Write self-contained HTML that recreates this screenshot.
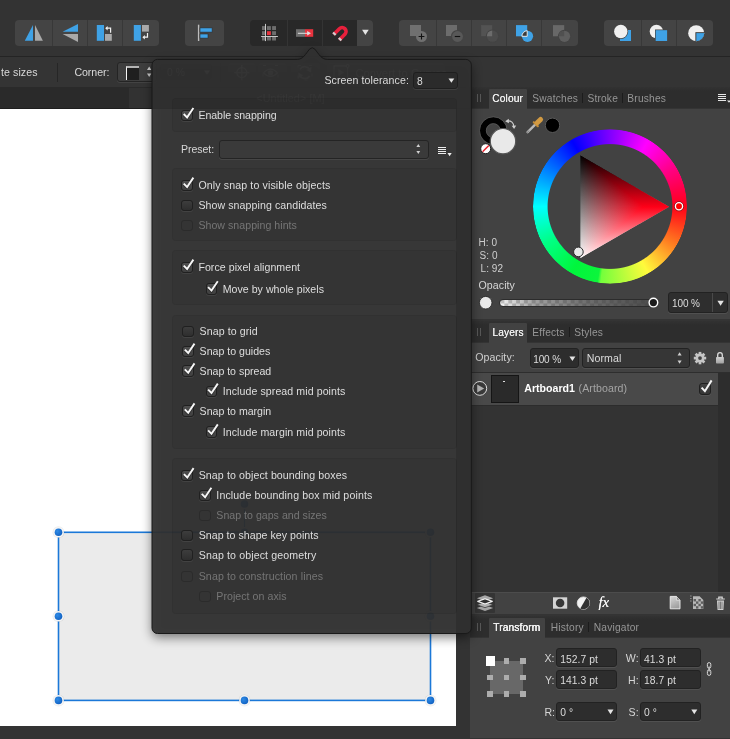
<!DOCTYPE html><html><head><meta charset="utf-8"><title>Snapping</title><style>
html,body{margin:0;padding:0;}
body{width:730px;height:739px;overflow:hidden;background:#333333;position:relative;
 font-family:"Liberation Sans",sans-serif;font-size:10.5px;color:#d6d6d6;}
div,span,svg{position:absolute;box-sizing:border-box;}
.t{white-space:nowrap;line-height:12px;letter-spacing:0.08px;}
.grp{background:#444444;border-radius:4px;}
.dgrp{background:#282828;border-radius:4px;}
.fld{background:#2d2d2d;border:1px solid #222222;border-radius:3px;box-shadow:0 1px 0 rgba(255,255,255,0.08);}
.cb{border:1px solid #202020;border-radius:3px;background:linear-gradient(#4e4e4e,#404040);box-shadow:0 1px 0 rgba(255,255,255,0.07);}
.cb.off{background:linear-gradient(#3d3d3d,#2e2e2e);}
.cb.dis{background:#343434;border-color:#2b2b2b;box-shadow:none;}
.gb{background:rgba(0,0,0,0.05);border-radius:4px;box-shadow:inset 0 0 0 1px rgba(0,0,0,0.05);}
.tabbar{background:linear-gradient(#323232 0,#2d2d2d 4px);}
.tab{background:#424242;}
</style></head><body><div id="root" style="left:0;top:0;width:730px;height:739px;will-change:transform;">
<div style="left:0px;top:0px;width:730px;height:56px;background:#333333;"></div>
<div style="left:0px;top:56px;width:730px;height:1px;background:#242424;"></div>
<div style="left:0px;top:57px;width:730px;height:30px;background:#343434;"></div>
<div style="left:0px;top:87px;width:470px;height:1px;background:#2a2a2a;"></div>
<span class="t" style="left:4px;top:-12px;font-size:11px;color:#a8a8a8;">Affinity Designer</span>
<span class="t" style="left:122px;top:-12px;font-size:11px;color:#a8a8a8;">(see Snapping options),</span>
<div class="grp" style="left:15px;top:20px;width:144px;height:26px;"></div>
<div style="left:51.5px;top:20px;width:1px;height:26px;background:#383838;"></div>
<div style="left:87.0px;top:20px;width:1px;height:26px;background:#383838;"></div>
<div style="left:122.0px;top:20px;width:1px;height:26px;background:#383838;"></div>
<svg style="left:0;top:0" width="730" height="60" viewBox="0 0 730 60">
<polygon points="24.8,40.8 33,40.8 33,25" fill="#3fa2e6"/>
<polygon points="35,25 35,40.8 42.9,40.8" fill="#a9a9a9"/>
<polygon points="62.6,31.8 78,31.8 78,23.9" fill="#3fa2e6"/>
<polygon points="62.6,34 78,34 78,42" fill="#a9a9a9"/>
<rect x="96.8" y="25" width="7.2" height="15.8" fill="#3fa2e6"/>
<rect x="105" y="34" width="6.8" height="6.8" fill="#a9a9a9"/>
<path d="M106.6 28.2 H110.6 V32.8" fill="none" stroke="#f0f0f0" stroke-width="1.2"/>
<polygon points="105.2,28.2 107.6,26 107.6,30.4" fill="#f0f0f0"/>
<rect x="133.8" y="25" width="7.1" height="15.8" fill="#3fa2e6"/>
<rect x="142" y="25" width="6.9" height="6.6" fill="#a9a9a9"/>
<path d="M147.5 33 V37.2 H144" fill="none" stroke="#f0f0f0" stroke-width="1.2"/>
<polygon points="142.4,37.2 144.8,35 144.8,39.4" fill="#f0f0f0"/>
</svg>
<div class="grp" style="left:185px;top:20px;width:39px;height:26px;"></div>
<svg style="left:0;top:0" width="730" height="60" viewBox="0 0 730 60">
<rect x="197.9" y="24.7" width="1.4" height="16.3" fill="#bdbdbd"/>
<rect x="200" y="27.9" width="12.1" height="4.2" fill="#3fa2e6" stroke="#2c2c2c" stroke-width="0.6"/>
<rect x="200" y="34" width="8" height="4.1" fill="#3fa2e6" stroke="#2c2c2c" stroke-width="0.6"/>
</svg>
<div class="dgrp" style="left:250px;top:20px;width:123px;height:26px;"></div>
<div style="left:357px;top:20px;width:16px;height:26px;background:#444444;border-radius:0 4px 4px 0;"></div>
<div style="left:287.0px;top:20px;width:1px;height:26px;background:#343434;"></div>
<div style="left:322.0px;top:20px;width:1px;height:26px;background:#343434;"></div>
<svg style="left:0;top:0" width="730" height="60" viewBox="0 0 730 60"><rect x="262" y="26.1" width="3.9" height="3.9" fill="#6e6e6e"/><rect x="262" y="31.2" width="3.9" height="3.9" fill="#6e6e6e"/><rect x="262" y="36.6" width="3.9" height="3.9" fill="#6e6e6e"/><rect x="267" y="26.1" width="3.9" height="3.9" fill="#6e6e6e"/><rect x="267" y="31.2" width="3.9" height="3.9" fill="#e8343f"/><rect x="267" y="36.6" width="3.9" height="3.9" fill="#6e6e6e"/><rect x="272.1" y="26.1" width="3.9" height="3.9" fill="#6e6e6e"/><rect x="272.1" y="31.2" width="3.9" height="3.9" fill="#6e6e6e"/><rect x="272.1" y="36.6" width="3.9" height="3.9" fill="#6e6e6e"/><rect x="265.1" y="23.9" width="0.9" height="17.2" fill="#d8d8d8"/><rect x="261.1" y="36" width="16.8" height="0.9" fill="#d8d8d8"/><rect x="296" y="29.2" width="9" height="7.6" fill="#6e6e6e"/><rect x="305" y="29.2" width="8.2" height="7.6" fill="#e8343f"/><rect x="297.9" y="32.8" width="10" height="1" fill="#e0e0e0"/><polygon points="311,33.3 307.2,31 307.2,35.6" fill="#e0e0e0"/><path d="M333.6 34.5 L339.4 28.7 A3.93 3.93 0 0 1 345.1 34.1 L339.3 39.9" fill="none" stroke="#e8203c" stroke-width="3.6"/><path d="M333.6 34.5 L335.1 33" fill="none" stroke="#d0d0d0" stroke-width="3.6"/><path d="M339.3 39.9 L340.8 38.4" fill="none" stroke="#d0d0d0" stroke-width="3.6"/><polygon points="362.1,29.8 368.7,29.8 365.4,35" fill="#e4e4e4"/></svg>
<div class="grp" style="left:399px;top:20px;width:178.5px;height:26px;"></div>
<div style="left:436.0px;top:20px;width:1px;height:26px;background:#383838;"></div>
<div style="left:471.0px;top:20px;width:1px;height:26px;background:#383838;"></div>
<div style="left:506.0px;top:20px;width:1px;height:26px;background:#383838;"></div>
<div style="left:541.0px;top:20px;width:1px;height:26px;background:#383838;"></div>
<svg style="left:0;top:0" width="730" height="60" viewBox="0 0 730 60">
<defs>
<clipPath id="cq1"><rect x="481" y="25" width="10.8" height="10.8"/></clipPath>
<clipPath id="cq2"><rect x="516" y="25" width="11" height="11"/></clipPath>
<clipPath id="cq3"><rect x="553" y="25" width="11" height="11"/></clipPath>
<clipPath id="cq4"><circle cx="696.2" cy="33.2" r="8"/></clipPath>
</defs>
<rect x="410" y="25" width="11" height="11" fill="#707070"/>
<circle cx="421.5" cy="36.5" r="5.5" fill="#707070"/>
<path d="M418.6 36.5 H424.4 M421.5 33.6 V39.4" stroke="#111" stroke-width="1.1"/>
<rect x="446" y="25" width="11" height="11" fill="#6c6c6c"/>
<circle cx="457.5" cy="36.5" r="6.6" fill="#444444"/>
<circle cx="457.5" cy="36.5" r="5.4" fill="#585858"/>
<path d="M454.8 36.5 H460.2" stroke="#111" stroke-width="1.1"/>
<rect x="481.1" y="25.1" width="11.1" height="11.1" fill="#535353"/>
<circle cx="492.5" cy="36.2" r="6.6" fill="#444444"/>
<circle cx="492.5" cy="36.2" r="5.6" fill="#4c4c4c"/>
<path d="M486.9 36.2 A5.6 5.6 0 0 1 492.2 30.6 V36.2 Z" fill="#6c6c6c"/>
<rect x="516" y="25.1" width="11.2" height="11.2" fill="#3fa2e6"/>
<circle cx="527.5" cy="36.3" r="5.6" fill="#3fa2e6"/>
<path d="M521.9 36.3 A5.6 5.6 0 0 1 527.2 30.7 V36.3 Z" fill="#3a3a3a" stroke="#f4f4f4" stroke-width="0.9"/>
<rect x="553" y="25.1" width="11.2" height="11.2" fill="#686868"/>
<circle cx="564.5" cy="36.3" r="6.6" fill="#444444"/>
<circle cx="564.5" cy="36.3" r="5.6" fill="#5e5e5e"/>
<path d="M558.9 36.3 A5.6 5.6 0 0 1 564.2 30.7 V36.3 Z" fill="#505050"/>
</svg>
<div class="grp" style="left:604px;top:20px;width:109px;height:26px;"></div>
<div style="left:641.2px;top:20px;width:1px;height:26px;background:#383838;"></div>
<div style="left:676.1px;top:20px;width:1px;height:26px;background:#383838;"></div>
<svg style="left:0;top:0" width="730" height="60" viewBox="0 0 730 60">
<defs><clipPath id="cq5"><circle cx="696.2" cy="33.2" r="8"/></clipPath></defs>
<rect x="620" y="30" width="11" height="11" fill="#3fa2e6"/>
<circle cx="620.8" cy="31.5" r="7.4" fill="#444444"/>
<circle cx="620.8" cy="31.5" r="6.7" fill="#f0f0f0"/>
<circle cx="656.4" cy="31.5" r="6.7" fill="#f0f0f0"/>
<rect x="655" y="29.5" width="12.1" height="11.5" fill="#444444"/>
<rect x="655.7" y="30.2" width="11.4" height="10.8" fill="#3fa2e6"/>
<circle cx="696.2" cy="33.2" r="8" fill="#f0f0f0"/>
<rect x="695.4" y="32.2" width="10" height="10" fill="#333" clip-path="url(#cq5)"/>
<rect x="696.3" y="33.1" width="10" height="10" fill="#3fa2e6" clip-path="url(#cq5)"/>
</svg>
<span class="t" style="left:1px;top:66px;font-size:10.6px;color:#dadada;">te sizes</span>
<div style="left:57px;top:63px;width:1px;height:19px;background:#262626;"></div>
<span class="t" style="left:74.4px;top:66px;font-size:10.6px;color:#dadada;letter-spacing:-0.034px;">Corner:</span>
<div class="fld" style="left:117px;top:62.3px;width:40px;height:19.5px;background:#3e3e3e;border-color:#242424;"></div>
<div style="left:125.8px;top:65.8px;width:13.1px;height:13.9px;background:#1f1f1f;border-left:1.3px solid #f4f4f4;border-top:2px solid #b4b4b4;"></div>
<svg style="left:0;top:0" width="730" height="100" viewBox="0 0 730 100"><polygon points="147,70 151.4,70 149.2,66.6" fill="#cfcfcf"/><polygon points="147,73.6 151.4,73.6 149.2,77" fill="#cfcfcf"/></svg>
<div class="fld" style="left:159.6px;top:63.6px;width:52px;height:16.6px;background:#2a2a2a;"></div>
<span class="t" style="left:167px;top:66.5px;font-size:10.3px;color:#a8a8a8;">0 %</span>
<div style="left:220px;top:63px;width:1px;height:19px;background:#262626;"></div>
<div style="left:228px;top:62.5px;width:28px;height:20px;background:#444444;border-radius:3px;"></div>
<div style="left:258px;top:62.5px;width:29px;height:20px;background:#444444;border-radius:3px;"></div>
<div style="left:291px;top:62.5px;width:29px;height:20px;background:#444444;border-radius:3px;"></div>
<div style="left:327px;top:62.5px;width:118px;height:20px;background:#444444;border-radius:3px;"></div>
<svg style="left:0;top:0" width="730" height="100" viewBox="0 0 730 100">
<polygon points="204,70.4 210,70.4 207,74.8" fill="#b4b4b4"/>
<circle cx="241.8" cy="72.6" r="5" fill="none" stroke="#b4b4b4" stroke-width="1.2"/>
<path d="M241.8 65 V80.2 M234.2 72.6 H249.4" stroke="#b4b4b4" stroke-width="1.1"/>
<path d="M263.5 72.8 Q270.5 65.6 277.5 72.8 Q270.5 80 263.5 72.8 Z" fill="none" stroke="#b4b4b4" stroke-width="1.2"/>
<circle cx="270.5" cy="72.8" r="2.6" fill="#b4b4b4"/>
<rect x="263" y="65.5" width="15" height="14.6" fill="none" stroke="#9c9c9c" stroke-width="0.8" stroke-dasharray="3 9"/>
<path d="M300 69.2 A5.6 5.6 0 0 1 310 70.4 M309.6 76 A5.6 5.6 0 0 1 299.6 74.8" fill="none" stroke="#b4b4b4" stroke-width="1.6"/>
<polygon points="311.4,67 311,72.4 306.6,70" fill="#b4b4b4"/><polygon points="298.2,78.2 298.6,72.8 303,75.2" fill="#b4b4b4"/>
<rect x="298" y="65.5" width="14" height="14.6" fill="none" stroke="#9c9c9c" stroke-width="0.8" stroke-dasharray="3 8"/>
<rect x="334" y="66" width="13.6" height="12.6" fill="none" stroke="#b4b4b4" stroke-width="1"/>
<polygon points="338.4,69 338.4,76 344.2,72.5" fill="#b4b4b4"/>
<circle cx="347.6" cy="66" r="1.5" fill="#444" stroke="#b4b4b4" stroke-width="0.8"/>
</svg>
<span class="t" style="left:355.4px;top:67px;font-size:11.2px;color:#b4b4b4;">Convert to Curves</span>
<div style="left:0px;top:88px;width:470px;height:20px;background:#2a2a2a;"></div>
<div style="left:128.5px;top:88px;width:342px;height:20px;background:#323232;"></div>
<div style="left:0px;top:108px;width:470px;height:1px;background:#1e1e1e;"></div>
<span class="t" style="left:256.3px;top:92px;font-size:10.8px;color:#c8c8c8;">&lt;Untitled&gt; [M]</span>
<div style="left:0px;top:109px;width:456px;height:617px;background:#ffffff;"></div>
<div style="left:58.5px;top:532.3px;width:372px;height:168.1px;background:#ebebeb;"></div>
<svg style="left:0;top:0" width="730" height="739" viewBox="0 0 730 739"><defs><radialGradient id="hg" cx="35%" cy="35%" r="75%"><stop offset="0" stop-color="#2f8be6"/><stop offset="1" stop-color="#0f5fc0"/></radialGradient></defs><rect x="58.5" y="532.3" width="372" height="168.1" fill="none" stroke="#1b78d8" stroke-width="1.6"/><path d="M244.5 532.3 V507" stroke="#1b78d8" stroke-width="1.2"/>
<circle cx="58.5" cy="532.3" r="6" fill="#000" opacity="0.07"/><circle cx="58.5" cy="532.3" r="5.3" fill="#f6f6f6"/><circle cx="58.5" cy="532.3" r="3.8" fill="url(#hg)"/>
<circle cx="244.5" cy="532.3" r="6" fill="#000" opacity="0.07"/><circle cx="244.5" cy="532.3" r="5.3" fill="#f6f6f6"/><circle cx="244.5" cy="532.3" r="3.8" fill="url(#hg)"/>
<circle cx="430.5" cy="532.3" r="6" fill="#000" opacity="0.07"/><circle cx="430.5" cy="532.3" r="5.3" fill="#f6f6f6"/><circle cx="430.5" cy="532.3" r="3.8" fill="url(#hg)"/>
<circle cx="58.5" cy="616.3" r="6" fill="#000" opacity="0.07"/><circle cx="58.5" cy="616.3" r="5.3" fill="#f6f6f6"/><circle cx="58.5" cy="616.3" r="3.8" fill="url(#hg)"/>
<circle cx="430.5" cy="616.3" r="6" fill="#000" opacity="0.07"/><circle cx="430.5" cy="616.3" r="5.3" fill="#f6f6f6"/><circle cx="430.5" cy="616.3" r="3.8" fill="url(#hg)"/>
<circle cx="58.5" cy="700.4" r="6" fill="#000" opacity="0.07"/><circle cx="58.5" cy="700.4" r="5.3" fill="#f6f6f6"/><circle cx="58.5" cy="700.4" r="3.8" fill="url(#hg)"/>
<circle cx="244.5" cy="700.4" r="6" fill="#000" opacity="0.07"/><circle cx="244.5" cy="700.4" r="5.3" fill="#f6f6f6"/><circle cx="244.5" cy="700.4" r="3.8" fill="url(#hg)"/>
<circle cx="430.5" cy="700.4" r="6" fill="#000" opacity="0.07"/><circle cx="430.5" cy="700.4" r="5.3" fill="#f6f6f6"/><circle cx="430.5" cy="700.4" r="3.8" fill="url(#hg)"/>
<circle cx="244.5" cy="504" r="6" fill="#000" opacity="0.07"/><circle cx="244.5" cy="504" r="5.3" fill="#f6f6f6"/><circle cx="244.5" cy="504" r="3.8" fill="url(#hg)"/>
</svg>
<div style="left:470px;top:87px;width:260px;height:650.7px;background:#343434;"></div>
<div class="tabbar" style="left:470.3px;top:87px;width:260px;height:21px;"></div>
<div style="left:476.8px;top:94px;width:1px;height:8.2px;background:#585858;"></div>
<div style="left:480px;top:94px;width:1px;height:8.2px;background:#585858;"></div>
<div class="tab" style="left:489px;top:89.2px;width:38px;height:19.8px;border-radius:1px 1px 0 0;"></div>
<span class="t" style="left:492.3px;top:92.5px;font-size:10.2px;color:#ececec;letter-spacing:0.1px;text-shadow:0 0 0.4px #fff;">Colour</span>
<span class="t" style="left:532.3px;top:92.5px;font-size:10.2px;color:#969696;letter-spacing:0.2px;">Swatches</span>
<div style="left:582px;top:93px;width:1px;height:10px;background:#1c1c1c;"></div>
<span class="t" style="left:587.4px;top:92.5px;font-size:10.2px;color:#969696;letter-spacing:0.2px;">Stroke</span>
<div style="left:622.2px;top:93px;width:1px;height:10px;background:#1c1c1c;"></div>
<span class="t" style="left:627.3px;top:92.5px;font-size:10.2px;color:#969696;letter-spacing:0.2px;">Brushes</span>
<div style="left:470.3px;top:109px;width:260px;height:210px;background:#424242;"></div>
<svg style="left:0;top:0" width="730" height="739" viewBox="0 0 730 739"><g fill="#e6e6e6"><rect x="718" y="94" width="8" height="1"/><rect x="718" y="96" width="8" height="1"/><rect x="718" y="98" width="8" height="1"/><rect x="718" y="100" width="8" height="1"/></g><polygon points="727,100.4 731,100.4 729,102.8" fill="#e0e0e0"/></svg>
<div style="left:532.7px;top:129.39999999999998px;width:154.6px;height:154.6px;border-radius:50%;background:conic-gradient(from 90deg,#ff0018 0deg,#ff7a20 30deg,#fffa3c 60deg,#74ff3c 97deg,#0cf53c 99.5deg,#00f63c 120deg,#00ff84 150deg,#00ffff 180deg,#0080ff 210deg,#0000ff 240deg,#8000ff 270deg,#ff00ff 300deg,#ff0080 330deg,#ff0018 360deg);-webkit-mask:radial-gradient(circle closest-side,transparent 61.9px,#000 62.9px,#000 76.6px,transparent 77.6px);mask:radial-gradient(circle closest-side,transparent 61.9px,#000 62.9px,#000 76.6px,transparent 77.6px);"></div>
<div style="left:580.4px;top:155.4px;width:88.8px;height:102.5px;clip-path:polygon(0 0,100% 50%,0 100%);background:linear-gradient(#000000,#ffffff);"><div style="left:0;top:0;width:100%;height:50%;background:linear-gradient(#000000,#ff0018);-webkit-mask-image:conic-gradient(from 120deg at 0 0,rgba(0,0,0,1.000) 0deg,rgba(0,0,0,1.000) 8.899999999999999deg,rgba(0,0,0,0.781) 16deg,rgba(0,0,0,0.678) 20deg,rgba(0,0,0,0.566) 25deg,rgba(0,0,0,0.467) 30deg,rgba(0,0,0,0.377) 35deg,rgba(0,0,0,0.294) 40deg,rgba(0,0,0,0.217) 45deg,rgba(0,0,0,0.143) 50deg,rgba(0,0,0,0.071) 55deg,rgba(0,0,0,0.000) 60deg,rgba(0,0,0,0) 60.01deg,rgba(0,0,0,0) 360deg);mask-image:conic-gradient(from 120deg at 0 0,rgba(0,0,0,1.000) 0deg,rgba(0,0,0,1.000) 8.899999999999999deg,rgba(0,0,0,0.781) 16deg,rgba(0,0,0,0.678) 20deg,rgba(0,0,0,0.566) 25deg,rgba(0,0,0,0.467) 30deg,rgba(0,0,0,0.377) 35deg,rgba(0,0,0,0.294) 40deg,rgba(0,0,0,0.217) 45deg,rgba(0,0,0,0.143) 50deg,rgba(0,0,0,0.071) 55deg,rgba(0,0,0,0.000) 60deg,rgba(0,0,0,0) 60.01deg,rgba(0,0,0,0) 360deg);"></div><div style="left:0;top:50%;width:100%;height:50%;background:linear-gradient(#ff0018,#ffffff);-webkit-mask-image:conic-gradient(from 0deg at 0 100%,rgba(0,0,0,0.000) 0deg,rgba(0,0,0,0.071) 5deg,rgba(0,0,0,0.143) 10deg,rgba(0,0,0,0.217) 15deg,rgba(0,0,0,0.294) 20deg,rgba(0,0,0,0.377) 25deg,rgba(0,0,0,0.467) 30deg,rgba(0,0,0,0.566) 35deg,rgba(0,0,0,0.678) 40deg,rgba(0,0,0,0.781) 44deg,rgba(0,0,0,1.000) 51.1deg,rgba(0,0,0,1.000) 60deg,rgba(0,0,0,1) 90deg,rgba(0,0,0,0) 90.01deg,rgba(0,0,0,0) 360deg);mask-image:conic-gradient(from 0deg at 0 100%,rgba(0,0,0,0.000) 0deg,rgba(0,0,0,0.071) 5deg,rgba(0,0,0,0.143) 10deg,rgba(0,0,0,0.217) 15deg,rgba(0,0,0,0.294) 20deg,rgba(0,0,0,0.377) 25deg,rgba(0,0,0,0.467) 30deg,rgba(0,0,0,0.566) 35deg,rgba(0,0,0,0.678) 40deg,rgba(0,0,0,0.781) 44deg,rgba(0,0,0,1.000) 51.1deg,rgba(0,0,0,1.000) 60deg,rgba(0,0,0,1) 90deg,rgba(0,0,0,0) 90.01deg,rgba(0,0,0,0) 360deg);"></div></div>
<svg style="left:0;top:0" width="730" height="739" viewBox="0 0 730 739">
<defs>
<linearGradient id="gk" gradientUnits="userSpaceOnUse" x1="580.4" y1="155.4" x2="624.8" y2="232.3"><stop offset="0" stop-color="#000000"/><stop offset="1" stop-color="#ff0000"/></linearGradient>
<linearGradient id="gw" gradientUnits="userSpaceOnUse" x1="580.4" y1="258.0" x2="624.8" y2="181.1"><stop offset="0" stop-color="#00ffff"/><stop offset="1" stop-color="#000000"/></linearGradient>
</defs>

<circle cx="679" cy="206.3" r="4.6" fill="none" stroke="#222" stroke-width="0.8" opacity="0.7"/>
<circle cx="679" cy="206.3" r="3.6" fill="#ff0000" stroke="#ffffff" stroke-width="1.3"/>
<circle cx="578.4" cy="251.9" r="4.8" fill="#e9e9e9" stroke="#2a2a2a" stroke-width="1"/>
<!-- stroke / fill selectors -->
<circle cx="493.3" cy="130.6" r="10.4" fill="none" stroke="#000000" stroke-width="6.4"/>
<circle cx="493.3" cy="130.6" r="13.8" fill="none" stroke="#5a5a5a" stroke-width="0.8"/>
<circle cx="493.3" cy="130.6" r="7" fill="none" stroke="#5a5a5a" stroke-width="0.8"/>
<circle cx="503" cy="141.2" r="12.7" fill="#e9e9e9" stroke="#555555" stroke-width="1.2"/>
<circle cx="485.7" cy="148.7" r="5" fill="#ffffff" stroke="#222222" stroke-width="1"/>
<path d="M482.6 151.8 L488.8 145.6" stroke="#e8202a" stroke-width="1.4"/>
<path d="M507.2 120.9 Q513.4 120.4 513.9 126.8" fill="none" stroke="#cfcfcf" stroke-width="1.1"/>
<polygon points="505.2,121.3 508.8,118.7 508.9,123.3" fill="#cfcfcf"/>
<polygon points="514.1,129 511.7,125.7 516.2,125.5" fill="#cfcfcf"/>
<!-- eyedropper -->
<path d="M527.6 132.2 L536.6 123.2" stroke="#b8b8b8" stroke-width="2.4" stroke-linecap="round"/>
<path d="M527.2 132.6 L529 130.8" stroke="#8a8a8a" stroke-width="1.2" stroke-linecap="round"/>
<path d="M533.8 122.2 L537.8 126.2" stroke="#c08a38" stroke-width="2.2" stroke-linecap="round"/>
<path d="M537.2 122.8 L540.6 119.4" stroke="#d29a42" stroke-width="5" stroke-linecap="round"/>
<circle cx="552.5" cy="125.3" r="7.2" fill="#000000" stroke="#585858" stroke-width="1"/>
<!-- opacity -->
<circle cx="485.7" cy="302.7" r="6.3" fill="#e9e9e9" stroke="#2a2a2a" stroke-width="0.9"/>
</svg>
<span class="t" style="left:478.5px;top:236.5px;font-size:10px;color:#cfcfcf;">H: 0</span>
<span class="t" style="left:479.5px;top:249.5px;font-size:10px;color:#cfcfcf;">S: 0</span>
<span class="t" style="left:480.5px;top:262.5px;font-size:10px;color:#cfcfcf;">L: 92</span>
<span class="t" style="left:478.5px;top:279px;font-size:10.6px;color:#d6d6d6;">Opacity</span>
<div style="left:498.6px;top:298.6px;width:158px;height:8.6px;border-radius:4.3px;border:0.8px solid #2c2c2c;overflow:hidden;background:linear-gradient(90deg,rgba(60,60,60,0) 0%,rgba(60,60,60,0.45) 22%,rgba(60,60,60,0.72) 55%,rgba(60,60,60,0.93) 100%),conic-gradient(#f4f4f4 25%,#c2c2c2 0 50%,#f4f4f4 0 75%,#c2c2c2 0) 0.5px -0.4px/7.8px 7.8px;"></div>
<svg style="left:0;top:0" width="730" height="739" viewBox="0 0 730 739"><circle cx="653.4" cy="302.6" r="4.3" fill="#1c1c1c" stroke="#ffffff" stroke-width="1.4"/><polygon points="717.4,300.8 723.8,300.8 720.6,305.8" fill="#e4e4e4"/></svg>
<div class="fld" style="left:668px;top:292.3px;width:60.3px;height:20.5px;background:#2e2e2e;"></div>
<div style="left:711.5px;top:293.3px;width:1px;height:18.5px;background:#4a4a4a;"></div>
<span class="t" style="left:672px;top:297.5px;font-size:10px;color:#dcdcdc;letter-spacing:-0.1px;">100 %</span>
<svg style="left:0;top:0" width="730" height="739" viewBox="0 0 730 739"><polygon points="717.4,300.8 723.8,300.8 720.6,305.8" fill="#e4e4e4"/></svg>
<div class="tabbar" style="left:470.3px;top:320.8px;width:260px;height:21.5px;"></div>
<div style="left:476.8px;top:327.8px;width:1px;height:8.2px;background:#585858;"></div>
<div style="left:480px;top:327.8px;width:1px;height:8.2px;background:#585858;"></div>
<div class="tab" style="left:489px;top:323.0px;width:38px;height:20.3px;border-radius:1px 1px 0 0;"></div>
<span class="t" style="left:492.5px;top:326.5px;font-size:10.2px;color:#ececec;letter-spacing:0.1px;text-shadow:0 0 0.4px #fff;">Layers</span>
<span class="t" style="left:532.3px;top:326.5px;font-size:10.2px;color:#969696;letter-spacing:0.2px;">Effects</span>
<div style="left:569px;top:327px;width:1px;height:10px;background:#1c1c1c;"></div>
<span class="t" style="left:574.2px;top:326.5px;font-size:10.2px;color:#969696;letter-spacing:0.2px;">Styles</span>
<div style="left:470.3px;top:343px;width:260px;height:28.5px;background:#424242;"></div>
<span class="t" style="left:475.3px;top:351px;font-size:10.6px;color:#d0d0d0;">Opacity:</span>
<div class="fld" style="left:529.7px;top:348.2px;width:49px;height:20.2px;"></div>
<span class="t" style="left:533.2px;top:353.5px;font-size:10px;color:#dcdcdc;letter-spacing:-0.1px;">100 %</span>
<div class="fld" style="left:581.7px;top:348.3px;width:108px;height:20px;background:#363636;"></div>
<span class="t" style="left:586.8px;top:352px;font-size:10.6px;color:#dcdcdc;">Normal</span>
<svg style="left:0;top:0" width="730" height="739" viewBox="0 0 730 739"><polygon points="569.4,356.4 575.4,356.4 572.4,361" fill="#e4e4e4"/><polygon points="677.6,355.4 681.6,355.4 679.6,352.2" fill="#d0d0d0"/><polygon points="677.6,360.6 681.6,360.6 679.6,363.8" fill="#d0d0d0"/></svg>
<svg style="left:0;top:0" width="730" height="739" viewBox="0 0 730 739"><rect x="698.65" y="351.90000000000003" width="2.7" height="12.4" fill="#c6c6c6" transform="rotate(0 700 358.1)"/><rect x="698.65" y="351.90000000000003" width="2.7" height="12.4" fill="#c6c6c6" transform="rotate(45 700 358.1)"/><rect x="698.65" y="351.90000000000003" width="2.7" height="12.4" fill="#c6c6c6" transform="rotate(90 700 358.1)"/><rect x="698.65" y="351.90000000000003" width="2.7" height="12.4" fill="#c6c6c6" transform="rotate(135 700 358.1)"/><circle cx="700" cy="358.1" r="4.5" fill="#c6c6c6"/><circle cx="700" cy="358.1" r="1.9" fill="#424242"/><defs><linearGradient id="lk" x1="0" y1="0" x2="0" y2="1"><stop offset="0" stop-color="#d0d0d0"/><stop offset="1" stop-color="#a2a2a2"/></linearGradient></defs><path d="M717.7 357.4 V355 A2.3 2.3 0 0 1 722.3 355 V357.4" fill="none" stroke="#dcdcdc" stroke-width="1.3"/><rect x="716" y="357" width="7.9" height="6.6" rx="0.8" fill="url(#lk)"/></svg>
<div style="left:470.3px;top:371.5px;width:260px;height:1px;background:#2e2e2e;"></div>
<div style="left:470.3px;top:372.5px;width:260px;height:219px;background:#333333;"></div>
<div style="left:718px;top:372.5px;width:12px;height:219px;background:#2d2d2d;"></div>
<div style="left:470.3px;top:372.5px;width:247.7px;height:32.8px;background:#494949;"></div>
<div style="left:470.3px;top:405.3px;width:247.7px;height:1px;background:#2c2c2c;"></div>
<div style="left:491px;top:375px;width:28px;height:28px;background:#2a2a2a;border:1px solid #151515;"></div>
<div style="left:503.2px;top:381.4px;width:1.4px;height:1px;background:#e0e0e0;"></div>
<svg style="left:0;top:0" width="730" height="739" viewBox="0 0 730 739"><circle cx="479.8" cy="388.4" r="6.9" fill="#3a3a3a" stroke="#e0e0e0" stroke-width="1"/><polygon points="477.2,384.4 477.2,392.4 484.2,388.4" fill="#b4b4b4"/></svg>
<span class="t" style="left:524.3px;top:382px;font-size:10.6px;color:#ffffff;font-weight:bold;letter-spacing:0;">Artboard1</span>
<span class="t" style="left:578.6px;top:382px;font-size:10.6px;color:#a4a4a4;">(Artboard)</span>
<div class="cb" style="left:699.4px;top:383px;width:12px;height:12px;background:linear-gradient(#424242,#363636);"></div>
<svg style="left:0;top:0" width="730" height="739" viewBox="0 0 730 739"><path d="M701.6 387.6 L704.9 391.2 L711.6 380.4" fill="none" stroke="#f4f4f4" stroke-width="2" stroke-linejoin="miter"/></svg>
<div style="left:470.3px;top:591.6px;width:260px;height:22.4px;background:#424242;border-top:1px solid #4c4c4c;"></div>
<div style="left:474.6px;top:593.2px;width:20.6px;height:19.7px;background:#343434;border-radius:1px;"></div>
<svg style="left:0;top:0" width="730" height="739" viewBox="0 0 730 739">
<path d="M476.8 607.9 L485 604.9 L493.2 607.9 L485 610.9 Z" fill="#a4a4a4"/>
<path d="M476.8 604.7 L485 601.7 L493.2 604.7 L485 607.7 Z" fill="#b0b0b0" stroke="#343434" stroke-width="0.7"/>
<path d="M476.8 598.3 L485 595.3 L493.2 598.3 L485 601.3 Z" fill="#a8a8a8"/>
<path d="M477.7 601.4 L485 598.8 L492.3 601.4 L485 604.0 Z" fill="#303030" stroke="#f6f6f6" stroke-width="1.15" stroke-linejoin="round"/>
<rect x="553" y="597.3" width="14.2" height="11.4" fill="#d4d4d4"/>
<circle cx="560.1" cy="603" r="4.3" fill="#383838"/>
<circle cx="583.4" cy="603.1" r="6.2" fill="#f2f2f2" stroke="#e4e4e4" stroke-width="0.8"/>
<path d="M586.5 597.7 A6.2 6.2 0 0 1 580.3 608.5 Z" fill="#303030"/>
<defs><linearGradient id="pg" x1="0" y1="0" x2="0.4" y2="1"><stop offset="0" stop-color="#d8d8d8"/><stop offset="1" stop-color="#a0a0a0"/></linearGradient></defs>
<path d="M670.2 596.4 H676.4 L680 600.2 V608.8 H670.2 Z" fill="url(#pg)" stroke="#f2f2f2" stroke-width="0.9"/>
<path d="M676.4 596.4 V600.2 H680" fill="#8c8c8c" stroke="#f2f2f2" stroke-width="0.7"/>
<path d="M693 596.3 H699.6 L703.3 600 V609 H693 Z" fill="#b8b8b8"/>
<path d="M690.4 596 H692 M690.4 598.6 H692 M690.4 601 H692" stroke="#cfcfcf" stroke-width="0.9" stroke-dasharray="1 1"/>
<g fill="#5e5e5e"><rect x="693.6" y="599" width="2.4" height="2.4"/><rect x="698.4" y="599" width="2.4" height="2.4"/><rect x="696" y="601.4" width="2.4" height="2.4"/><rect x="700.8" y="601.4" width="2.4" height="2.4"/><rect x="693.6" y="603.8" width="2.4" height="2.4"/><rect x="698.4" y="603.8" width="2.4" height="2.4"/><rect x="696" y="606.2" width="2.4" height="2.4"/><rect x="700.8" y="606.2" width="2.4" height="2.4"/></g>
<path d="M716.2 599 H724.8 M718.8 598.6 V597.2 H722.2 V598.6" fill="none" stroke="#d8d8d8" stroke-width="1.2"/>
<path d="M717 600.6 H724 L723.4 610 H717.6 Z" fill="#d0d0d0"/>
<path d="M719 601.6 V609 M720.5 601.6 V609 M722 601.6 V609" stroke="#555" stroke-width="0.7"/>
</svg>
<span class="t" style="left:598.4px;top:595.5px;font-size:15px;color:#f4f4f4;font-family:'Liberation Serif',serif;font-style:italic;letter-spacing:0;text-shadow:0 0 0.5px #fff;">fx</span>
<div class="tabbar" style="left:470.3px;top:615.8px;width:260px;height:21.7px;"></div>
<div style="left:476.8px;top:622.8px;width:1px;height:8.2px;background:#585858;"></div>
<div style="left:480px;top:622.8px;width:1px;height:8.2px;background:#585858;"></div>
<div class="tab" style="left:489px;top:618.0px;width:56px;height:20.5px;border-radius:1px 1px 0 0;"></div>
<span class="t" style="left:493.2px;top:621.5px;font-size:10.2px;color:#ececec;letter-spacing:0.12px;text-shadow:0 0 0.5px #fff,0 0 0.5px #fff;">Transform</span>
<span class="t" style="left:550.7px;top:621.5px;font-size:10.2px;color:#969696;letter-spacing:0.2px;">History</span>
<div style="left:588.2px;top:622px;width:1px;height:10px;background:#1c1c1c;"></div>
<span class="t" style="left:593.8px;top:621.5px;font-size:10.2px;color:#969696;letter-spacing:0.2px;">Navigator</span>
<div style="left:470.3px;top:637.5px;width:260px;height:100.2px;background:#424242;"></div>
<div style="left:490px;top:661px;width:33.4px;height:33px;background:#686868;"></div>
<div style="left:487.2px;top:674.7px;width:5.6px;height:5.6px;background:#adadad;"></div>
<div style="left:487.2px;top:691.2px;width:5.6px;height:5.6px;background:#adadad;"></div>
<div style="left:503.8px;top:658.2px;width:5.6px;height:5.6px;background:#adadad;"></div>
<div style="left:503.8px;top:674.7px;width:5.6px;height:5.6px;background:#adadad;"></div>
<div style="left:503.8px;top:691.2px;width:5.6px;height:5.6px;background:#adadad;"></div>
<div style="left:520.4000000000001px;top:658.2px;width:5.6px;height:5.6px;background:#adadad;"></div>
<div style="left:520.4000000000001px;top:674.7px;width:5.6px;height:5.6px;background:#adadad;"></div>
<div style="left:520.4000000000001px;top:691.2px;width:5.6px;height:5.6px;background:#adadad;"></div>
<div style="left:485.5px;top:656.4px;width:9.8px;height:9.2px;background:#ffffff;"></div>
<div class="fld" style="left:556.4px;top:648.3px;width:60.5px;height:18.5px;"></div>
<span class="t" style="left:544.4px;top:652px;font-size:10.6px;color:#d6d6d6;">X:</span>
<span class="t" style="left:560.1999999999999px;top:653.5px;font-size:10.3px;color:#dcdcdc;">152.7 pt</span>
<div class="fld" style="left:556.4px;top:670.0px;width:60.5px;height:18.5px;"></div>
<span class="t" style="left:545px;top:674px;font-size:10.6px;color:#d6d6d6;">Y:</span>
<span class="t" style="left:560.1999999999999px;top:674.5px;font-size:10.3px;color:#dcdcdc;">141.3 pt</span>
<div class="fld" style="left:640.2px;top:648.3px;width:60.5px;height:18.5px;"></div>
<span class="t" style="left:625.8px;top:652px;font-size:10.6px;color:#d6d6d6;">W:</span>
<span class="t" style="left:644.0px;top:653.5px;font-size:10.3px;color:#dcdcdc;">41.3 pt</span>
<div class="fld" style="left:640.2px;top:670.0px;width:60.5px;height:18.5px;"></div>
<span class="t" style="left:628px;top:674px;font-size:10.6px;color:#d6d6d6;">H:</span>
<span class="t" style="left:644.0px;top:674.5px;font-size:10.3px;color:#dcdcdc;">18.7 pt</span>
<div class="fld" style="left:556.4px;top:702.1px;width:60.5px;height:18.5px;"></div>
<span class="t" style="left:544.4px;top:706px;font-size:10.6px;color:#d6d6d6;">R:</span>
<span class="t" style="left:560.1999999999999px;top:706.5px;font-size:10.3px;color:#dcdcdc;">0 °</span>
<svg style="left:0;top:0" width="730" height="739" viewBox="0 0 730 739"><polygon points="607.5,709.6 613.5,709.6 610.5,714.2" fill="#e4e4e4"/></svg>
<div class="fld" style="left:640.2px;top:702.1px;width:60.5px;height:18.5px;"></div>
<span class="t" style="left:628.6px;top:706px;font-size:10.6px;color:#d6d6d6;">S:</span>
<span class="t" style="left:644.0px;top:706.5px;font-size:10.3px;color:#dcdcdc;">0 °</span>
<svg style="left:0;top:0" width="730" height="739" viewBox="0 0 730 739"><polygon points="691.3000000000001,709.6 697.3000000000001,709.6 694.3000000000001,714.2" fill="#e4e4e4"/></svg>
<svg style="left:0;top:0" width="730" height="739" viewBox="0 0 730 739"><rect x="707.4" y="662.6" width="3.4" height="5.6" rx="1.7" fill="none" stroke="#d8d8d8" stroke-width="1"/><rect x="707.4" y="669.8" width="3.4" height="5.6" rx="1.7" fill="none" stroke="#d8d8d8" stroke-width="1"/><path d="M709.1 666.4 V671.6" stroke="#d8d8d8" stroke-width="1"/></svg>
<svg style="left:0;top:0" width="730" height="739" viewBox="0 0 730 739">
<defs><filter id="sh" x="-10%" y="-10%" width="120%" height="120%"><feGaussianBlur stdDeviation="5.5"/></filter></defs>
<path d="M157.5 59.4 H297.2 C303.2 59.4 305.59999999999997 53.9 309.5 49.2 Q312.2 46.2 314.9 49.2 C318.8 53.9 321.2 59.4 327.2 59.4 H465.8 A5.5 5.5 0 0 1 471.3 64.9 V628.0 A5.5 5.5 0 0 1 465.8 633.5 H157.5 A5.5 5.5 0 0 1 152 628.0 V64.9 A5.5 5.5 0 0 1 157.5 59.4 Z" fill="#000" opacity="0.5" filter="url(#sh)" transform="translate(0,4)"/>
<path d="M157.5 59.4 H297.2 C303.2 59.4 305.59999999999997 53.9 309.5 49.2 Q312.2 46.2 314.9 49.2 C318.8 53.9 321.2 59.4 327.2 59.4 H465.8 A5.5 5.5 0 0 1 471.3 64.9 V628.0 A5.5 5.5 0 0 1 465.8 633.5 H157.5 A5.5 5.5 0 0 1 152 628.0 V64.9 A5.5 5.5 0 0 1 157.5 59.4 Z" fill="#313131" fill-opacity="0.92" stroke="#191919" stroke-width="1" stroke-opacity="1"/>
</svg>
<span class="t" style="left:324.4px;top:74px;font-size:10.6px;color:#dadada;letter-spacing:0.091px;">Screen tolerance:</span>
<div class="fld" style="left:413.2px;top:72.4px;width:44.5px;height:16.6px;background:#2b2b2b;border-color:#1f1f1f;"></div>
<span class="t" style="left:416.9px;top:75.5px;font-size:10.3px;color:#dcdcdc;">8</span>
<svg style="left:0;top:0" width="730" height="739" viewBox="0 0 730 739"><polygon points="448.5,78.4 454.3,78.4 451.4,82.8" fill="#e4e4e4"/></svg>
<div class="gb" style="left:172px;top:98px;width:284.5px;height:34px;"></div>
<div class="cb" style="left:181.1px;top:110.0px;width:11.8px;height:11.4px;"></div>
<svg style="left:0;top:0" width="730" height="739" viewBox="0 0 730 739"><path d="M183.7 114.0 L187.1 117.4 L193.4 108.0" fill="none" stroke="#1a1a1a" stroke-opacity="0.5" stroke-width="2.6" transform="translate(0,0.8)"/><path d="M183.7 114.0 L187.1 117.4 L193.4 108.0" fill="none" stroke="#f6f6f6" stroke-width="1.9"/></svg>
<span class="t" style="left:198.4px;top:109px;font-size:10.6px;color:#dedede;letter-spacing:-0.047px;">Enable snapping</span>
<span class="t" style="left:181px;top:143px;font-size:10.6px;color:#d6d6d6;letter-spacing:-0.077px;">Preset:</span>
<div class="fld" style="left:219.4px;top:139.5px;width:209.5px;height:19.2px;background:#3a3a3a;border-color:#242424;"></div>
<svg style="left:0;top:0" width="730" height="739" viewBox="0 0 730 739"><polygon points="416.4,147 420.2,147 418.3,144" fill="#cfcfcf"/><polygon points="416.4,151 420.2,151 418.3,154" fill="#cfcfcf"/><g fill="#ececec"><rect x="438" y="147" width="8" height="1"/><rect x="438" y="149" width="8" height="1"/><rect x="438" y="151" width="8" height="1"/><rect x="438" y="153" width="8" height="1"/></g><polygon points="447.5,153 451.7,153 449.6,156.3" fill="#f0f0f0"/></svg>
<div class="gb" style="left:172px;top:168.4px;width:284.5px;height:72.6px;"></div>
<div class="cb" style="left:181.1px;top:179.60000000000002px;width:11.8px;height:11.4px;"></div>
<svg style="left:0;top:0" width="730" height="739" viewBox="0 0 730 739"><path d="M183.7 183.6 L187.1 187.0 L193.4 177.6" fill="none" stroke="#1a1a1a" stroke-opacity="0.5" stroke-width="2.6" transform="translate(0,0.8)"/><path d="M183.7 183.6 L187.1 187.0 L193.4 177.6" fill="none" stroke="#f6f6f6" stroke-width="1.9"/></svg>
<span class="t" style="left:198.4px;top:179px;font-size:10.6px;color:#dedede;letter-spacing:0.130px;">Only snap to visible objects</span>
<div class="cb off" style="left:181.1px;top:199.5px;width:11.8px;height:11.4px;"></div>
<span class="t" style="left:198.4px;top:199px;font-size:10.6px;color:#dedede;">Show snapping candidates</span>
<div class="cb dis" style="left:181.1px;top:219.70000000000002px;width:11.8px;height:11.4px;"></div>
<span class="t" style="left:198.4px;top:219px;font-size:10.6px;color:#757575;letter-spacing:0.038px;">Show snapping hints</span>
<div class="gb" style="left:172px;top:249.7px;width:284.5px;height:55.30000000000001px;"></div>
<div class="cb" style="left:181.1px;top:261.6px;width:11.8px;height:11.4px;"></div>
<svg style="left:0;top:0" width="730" height="739" viewBox="0 0 730 739"><path d="M183.7 265.6 L187.1 269.0 L193.4 259.6" fill="none" stroke="#1a1a1a" stroke-opacity="0.5" stroke-width="2.6" transform="translate(0,0.8)"/><path d="M183.7 265.6 L187.1 269.0 L193.4 259.6" fill="none" stroke="#f6f6f6" stroke-width="1.9"/></svg>
<span class="t" style="left:198.4px;top:261px;font-size:10.6px;color:#dedede;letter-spacing:0.047px;">Force pixel alignment</span>
<div class="cb" style="left:205.5px;top:283.2px;width:11.8px;height:11.4px;"></div>
<svg style="left:0;top:0" width="730" height="739" viewBox="0 0 730 739"><path d="M208.1 287.2 L211.5 290.6 L217.8 281.2" fill="none" stroke="#1a1a1a" stroke-opacity="0.5" stroke-width="2.6" transform="translate(0,0.8)"/><path d="M208.1 287.2 L211.5 290.6 L217.8 281.2" fill="none" stroke="#f6f6f6" stroke-width="1.9"/></svg>
<span class="t" style="left:222.7px;top:283px;font-size:10.6px;color:#dedede;letter-spacing:0.030px;">Move by whole pixels</span>
<div class="gb" style="left:172px;top:314.8px;width:284.5px;height:134.2px;"></div>
<div class="cb off" style="left:182.2px;top:325.8px;width:11.8px;height:11.4px;"></div>
<span class="t" style="left:199.6px;top:325px;font-size:10.6px;color:#dedede;">Snap to grid</span>
<div class="cb" style="left:182.2px;top:345.6px;width:11.8px;height:11.4px;"></div>
<svg style="left:0;top:0" width="730" height="739" viewBox="0 0 730 739"><path d="M184.8 349.6 L188.2 353.0 L194.5 343.6" fill="none" stroke="#1a1a1a" stroke-opacity="0.5" stroke-width="2.6" transform="translate(0,0.8)"/><path d="M184.8 349.6 L188.2 353.0 L194.5 343.6" fill="none" stroke="#f6f6f6" stroke-width="1.9"/></svg>
<span class="t" style="left:199.6px;top:345px;font-size:10.6px;color:#dedede;letter-spacing:0.001px;">Snap to guides</span>
<div class="cb" style="left:182.2px;top:365.40000000000003px;width:11.8px;height:11.4px;"></div>
<svg style="left:0;top:0" width="730" height="739" viewBox="0 0 730 739"><path d="M184.8 369.4 L188.2 372.8 L194.5 363.4" fill="none" stroke="#1a1a1a" stroke-opacity="0.5" stroke-width="2.6" transform="translate(0,0.8)"/><path d="M184.8 369.4 L188.2 372.8 L194.5 363.4" fill="none" stroke="#f6f6f6" stroke-width="1.9"/></svg>
<span class="t" style="left:199.6px;top:365px;font-size:10.6px;color:#dedede;letter-spacing:-0.020px;">Snap to spread</span>
<div class="cb" style="left:205.5px;top:385.6px;width:11.8px;height:11.4px;"></div>
<svg style="left:0;top:0" width="730" height="739" viewBox="0 0 730 739"><path d="M208.1 389.6 L211.5 393.0 L217.8 383.6" fill="none" stroke="#1a1a1a" stroke-opacity="0.5" stroke-width="2.6" transform="translate(0,0.8)"/><path d="M208.1 389.6 L211.5 393.0 L217.8 383.6" fill="none" stroke="#f6f6f6" stroke-width="1.9"/></svg>
<span class="t" style="left:222.7px;top:385px;font-size:10.6px;color:#dedede;">Include spread mid points</span>
<div class="cb" style="left:182.2px;top:405.40000000000003px;width:11.8px;height:11.4px;"></div>
<svg style="left:0;top:0" width="730" height="739" viewBox="0 0 730 739"><path d="M184.8 409.4 L188.2 412.8 L194.5 403.4" fill="none" stroke="#1a1a1a" stroke-opacity="0.5" stroke-width="2.6" transform="translate(0,0.8)"/><path d="M184.8 409.4 L188.2 412.8 L194.5 403.4" fill="none" stroke="#f6f6f6" stroke-width="1.9"/></svg>
<span class="t" style="left:199.6px;top:405px;font-size:10.6px;color:#dedede;letter-spacing:-0.020px;">Snap to margin</span>
<div class="cb" style="left:205.5px;top:426.40000000000003px;width:11.8px;height:11.4px;"></div>
<svg style="left:0;top:0" width="730" height="739" viewBox="0 0 730 739"><path d="M208.1 430.4 L211.5 433.8 L217.8 424.4" fill="none" stroke="#1a1a1a" stroke-opacity="0.5" stroke-width="2.6" transform="translate(0,0.8)"/><path d="M208.1 430.4 L211.5 433.8 L217.8 424.4" fill="none" stroke="#f6f6f6" stroke-width="1.9"/></svg>
<span class="t" style="left:222.7px;top:426px;font-size:10.6px;color:#dedede;">Include margin mid points</span>
<div class="gb" style="left:172px;top:458.4px;width:284.5px;height:155.39999999999998px;"></div>
<div class="cb" style="left:181.29999999999998px;top:470.1px;width:11.8px;height:11.4px;"></div>
<svg style="left:0;top:0" width="730" height="739" viewBox="0 0 730 739"><path d="M183.9 474.1 L187.3 477.5 L193.6 468.1" fill="none" stroke="#1a1a1a" stroke-opacity="0.5" stroke-width="2.6" transform="translate(0,0.8)"/><path d="M183.9 474.1 L187.3 477.5 L193.6 468.1" fill="none" stroke="#f6f6f6" stroke-width="1.9"/></svg>
<span class="t" style="left:198.7px;top:469px;font-size:10.6px;color:#dedede;letter-spacing:0.101px;">Snap to object bounding boxes</span>
<div class="cb" style="left:199.1px;top:489.8px;width:11.8px;height:11.4px;"></div>
<svg style="left:0;top:0" width="730" height="739" viewBox="0 0 730 739"><path d="M201.7 493.8 L205.1 497.2 L211.4 487.8" fill="none" stroke="#1a1a1a" stroke-opacity="0.5" stroke-width="2.6" transform="translate(0,0.8)"/><path d="M201.7 493.8 L205.1 497.2 L211.4 487.8" fill="none" stroke="#f6f6f6" stroke-width="1.9"/></svg>
<span class="t" style="left:216.3px;top:489px;font-size:10.6px;color:#dedede;letter-spacing:0.135px;">Include bounding box mid points</span>
<div class="cb dis" style="left:199.1px;top:509.8px;width:11.8px;height:11.4px;"></div>
<span class="t" style="left:216.3px;top:509px;font-size:10.6px;color:#757575;letter-spacing:0.016px;">Snap to gaps and sizes</span>
<div class="cb off" style="left:181.29999999999998px;top:529.5999999999999px;width:11.8px;height:11.4px;"></div>
<span class="t" style="left:198.7px;top:529px;font-size:10.6px;color:#dedede;letter-spacing:0.038px;">Snap to shape key points</span>
<div class="cb off" style="left:181.29999999999998px;top:549.4px;width:11.8px;height:11.4px;"></div>
<span class="t" style="left:198.7px;top:549px;font-size:10.6px;color:#dedede;letter-spacing:0.123px;">Snap to object geometry</span>
<div class="cb dis" style="left:181.29999999999998px;top:570.8px;width:11.8px;height:11.4px;"></div>
<span class="t" style="left:198.7px;top:570px;font-size:10.6px;color:#757575;letter-spacing:0.118px;">Snap to construction lines</span>
<div class="cb dis" style="left:199.1px;top:590.5px;width:11.8px;height:11.4px;"></div>
<span class="t" style="left:216.3px;top:590px;font-size:10.6px;color:#757575;letter-spacing:0.047px;">Project on axis</span>
</div></body></html>
